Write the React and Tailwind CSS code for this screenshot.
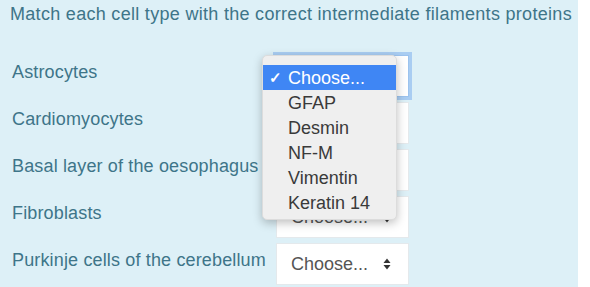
import React from "react";

const rows = [
  "Astrocytes",
  "Cardiomyocytes",
  "Basal layer of the oesophagus",
  "Fibroblasts",
  "Purkinje cells of the cerebellum",
];

const options = ["Choose...", "GFAP", "Desmin", "NF-M", "Vimentin", "Keratin 14"];

function Arrows() {
  return (
    <svg width="8" height="12" viewBox="0 0 8 12" className="shrink-0">
      <path d="M4 0.5 L7.5 5 L0.5 5 Z" fill="#333" />
      <path d="M4 11.5 L7.5 7 L0.5 7 Z" fill="#333" />
    </svg>
  );
}

function Select({ focused }) {
  return (
    <div
      className={
        "w-[133px] h-[42px] bg-white flex items-center pl-[14px] pr-[17px] justify-between border " +
        (focused
          ? "border-[#9cc3ee] ring-[3px] ring-[#a9cdf2]"
          : "border-[#e4e9ec]")
      }
    >
      <span className="text-[18px] text-[#555] leading-none">Choose...</span>
      <Arrows />
    </div>
  );
}

export default function App() {
  return (
    <div
      className="w-[590px] h-[287px] bg-white overflow-hidden"
      style={{ fontFamily: '"Liberation Sans", Arial, sans-serif' }}
    >
      <div className="relative w-[578px] h-[287px] bg-[#ddf0f7]">
        <div className="pl-[10px] pt-[4px] text-[18px] leading-[21px] tracking-[0.3px] text-[#3e7589] whitespace-nowrap">
          Match each cell type with the correct intermediate filaments proteins
        </div>
        <div className="mt-[30px] pl-[12px] flex flex-col gap-[5px]">
          {rows.map((r, i) => (
            <div key={r} className="flex items-center h-[42px]">
              <div className="w-[264px] pb-[8px] text-[18px] leading-[21px] tracking-[0.15px] text-[#3e7589] whitespace-nowrap">
                {r}
              </div>
              <Select focused={i === 0} />
            </div>
          ))}
        </div>

        <div className="absolute left-[262px] top-[55px] w-[135px] h-[165px] pt-[9px] rounded-[5px] bg-[#efefef] border border-[#dcdcdc] shadow-[0_3px_10px_rgba(0,0,0,0.25)]">
          {options.map((o, i) => (
            <div
              key={o}
              className={
                "h-[25px] flex items-center text-[18px] leading-none " +
                (i === 0 ? "bg-[#3f86f4] text-white" : "text-[#3a3a3a]")
              }
            >
              <span className="w-[25px] pl-[6px] text-[15px] font-bold">
                {i === 0 ? "✓" : ""}
              </span>
              <span>{o}</span>
            </div>
          ))}
        </div>
      </div>
    </div>
  );
}
